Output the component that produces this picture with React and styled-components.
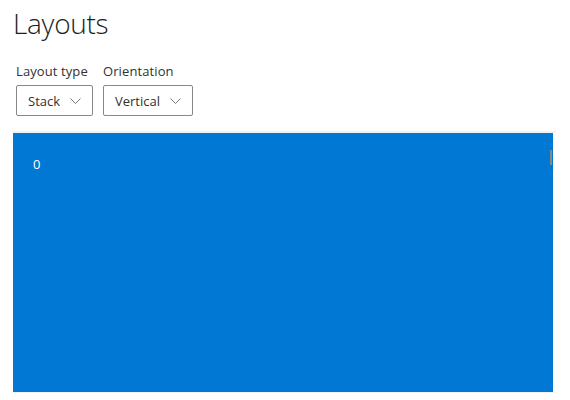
import React, { useState } from 'react'
import styled, { createGlobalStyle } from 'styled-components'

const GlobalStyle = createGlobalStyle`
  body {
    margin: 0;
    background: #ffffff;
    font-family: "Segoe UI", "Open Sans", "Noto Sans", sans-serif;
    color: #323130;
  }
`

const Page = styled.div`
  padding: 0 14px 0 13px;
`

const Title = styled.h1`
  margin: 0;
  padding-top: 3px;
  font-size: 28px;
  font-weight: 300;
  line-height: 40px;
  letter-spacing: -0.3px;
  color: #201f1e;
`

const Controls = styled.div`
  display: flex;
  gap: 10px;
  margin-top: 19px;
  padding-left: 3px;
`

const Field = styled.div`
  display: flex;
  flex-direction: column;
`

const Label = styled.label`
  font-size: 13px;
  line-height: 18px;
  padding-bottom: 5px;
  color: #323130;
  letter-spacing: 0.1px;
`

const Select = styled.div`
  box-sizing: border-box;
  display: flex;
  align-items: center;
  justify-content: space-between;
  width: ${p => p.$width}px;
  height: 31px;
  padding: 0 11px 0 11px;
  border: 1px solid #8a8886;
  border-radius: 2px;
  font-size: 13px;
  color: #323130;
  cursor: pointer;
`

const Chevron = () => (
  <svg width="11" height="6" viewBox="0 0 11 6" fill="none">
    <path d="M0.5 0.5 L5.5 5.5 L10.5 0.5" stroke="#7a7876" strokeWidth="1" />
  </svg>
)

const ScrollArea = styled.div`
  position: relative;
  margin-top: 15px;
  border-top: 2px solid #f3f2f1;
  border-bottom: 1px solid #f3f2f1;
  padding-right: 3px;
`

const Panel = styled.div`
  background: #0078d4;
  height: 259px;
  padding: 22px 0 0 20px;
  box-sizing: border-box;
`

const Item = styled.div`
  color: #ffffff;
  font-size: 13px;
  line-height: 18px;
`

const Thumb = styled.div`
  position: absolute;
  right: 4px;
  top: 17px;
  width: 2px;
  height: 15px;
  background: #8a8886;
`

export default function App() {
  const [layout] = useState('Stack')
  const [orientation] = useState('Vertical')

  return (
    <>
      <GlobalStyle />
      <Page>
        <Title>Layouts</Title>
        <Controls>
          <Field>
            <Label>Layout type</Label>
            <Select $width={77}>
              <span>{layout}</span>
              <Chevron />
            </Select>
          </Field>
          <Field>
            <Label>Orientation</Label>
            <Select $width={90}>
              <span>{orientation}</span>
              <Chevron />
            </Select>
          </Field>
        </Controls>
        <ScrollArea>
          <Panel>
            <Item>0</Item>
          </Panel>
          <Thumb />
        </ScrollArea>
      </Page>
    </>
  )
}
